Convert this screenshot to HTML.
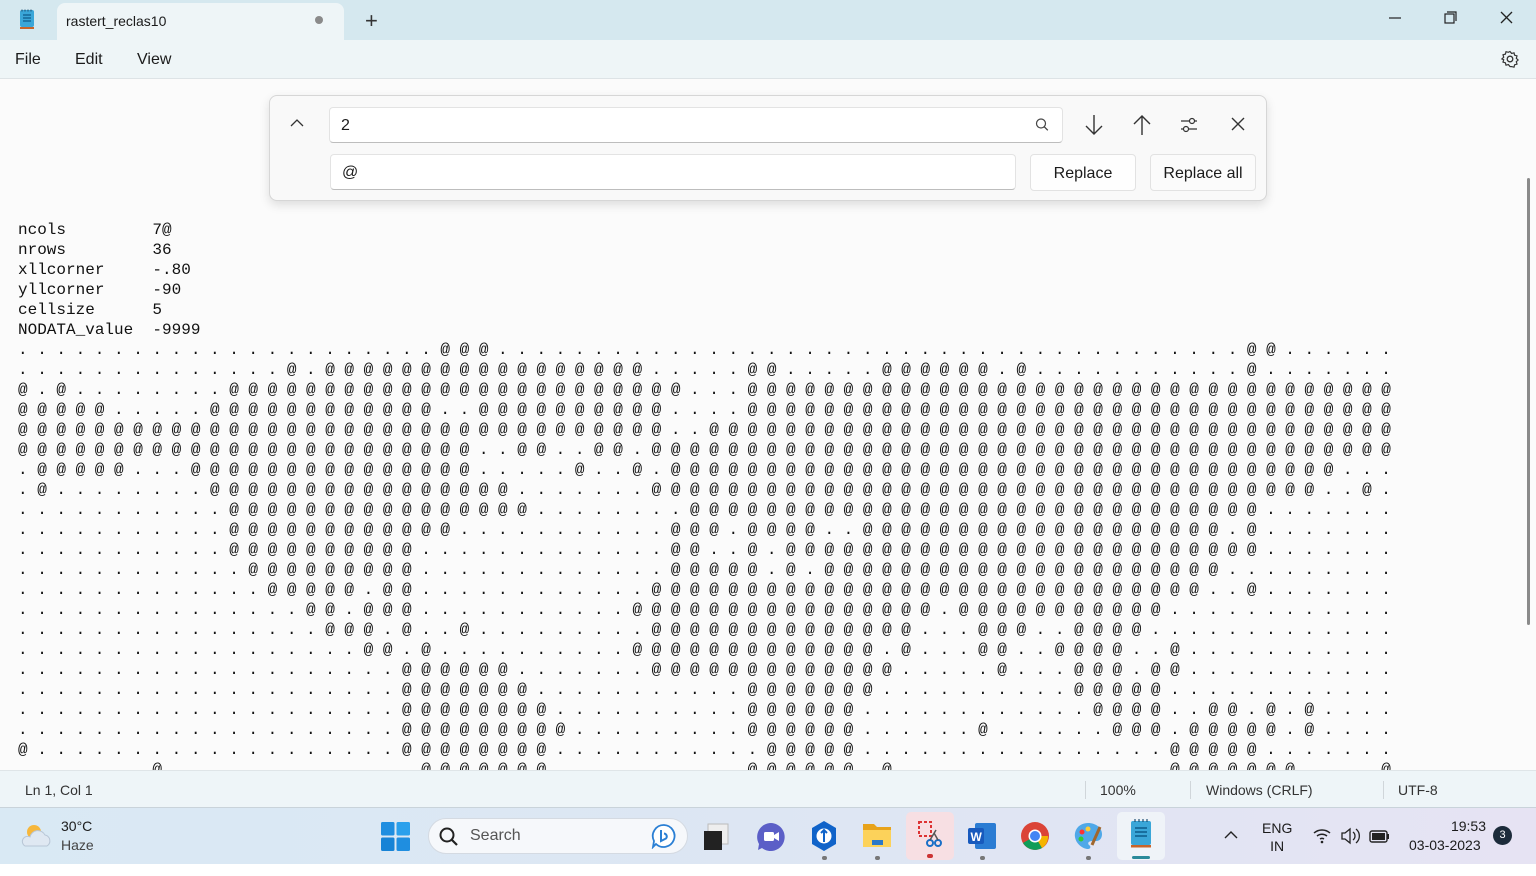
<!DOCTYPE html>
<html><head><meta charset="utf-8">
<style>
*{margin:0;padding:0;box-sizing:border-box}
body{width:1536px;height:876px;overflow:hidden;background:#fff;font-family:"Liberation Sans",sans-serif;position:relative;color:#1b1b1b}
.abs{position:absolute}
#title{left:0;top:0;width:1536px;height:40px;background:#d5e8ef}
#tab{left:57px;top:3px;width:287px;height:37px;background:#eef5f7;border-radius:8px 8px 0 0}
#menu{left:0;top:40px;width:1536px;height:39px;background:#eef5f7;border-bottom:1px solid #dde3e6}
#editor{left:0;top:79px;width:1536px;height:691px;background:#fbfbfb;overflow:hidden}
#text{position:absolute;left:18px;top:141px;font-family:"Liberation Mono",monospace;font-size:16px;line-height:20px;color:#111;white-space:pre}
.g{letter-spacing:9.6px}
#status{left:0;top:770px;width:1536px;height:37px;background:#eef5f8;border-top:1px solid #dfe5e8;font-size:14px;color:#333}
#task{left:0;top:807px;width:1536px;height:57px;background:linear-gradient(90deg,#d9e9f4,#dde6f3 50%,#e6e3f3);border-top:1px solid #c9d3da}
.sep{position:absolute;top:10px;width:1px;height:18px;background:#d0d6da}
</style></head><body>
<div id="title" class="abs"></div>
<div id="tab" class="abs"></div>
<svg class="abs" style="left:18px;top:8px" width="18" height="22" viewBox="0 0 18 22"><rect x="2" y="2" width="14" height="17" rx="2" fill="#3aa6d8"/><path d="M5 7h8M5 10h8M5 13h8" stroke="#0d5b8a" stroke-width="1.3"/><path d="M4 1.5v2M7 1.5v2M10 1.5v2M13 1.5v2" stroke="#1e4f72" stroke-width="1"/><rect x="2" y="19" width="14" height="2" fill="#c8642a"/></svg>
<div class="abs" style="left:66px;top:13px;font-size:14px;color:#1b1b1b">rastert_reclas10</div>
<div class="abs" style="left:315px;top:16px;width:8px;height:8px;border-radius:50%;background:#8a8a8a"></div>
<div class="abs" style="left:365px;top:8px;font-size:22px;color:#333;font-weight:300">+</div>
<svg class="abs" style="left:1386px;top:10px" width="130" height="20"><path d="M3 8h12" stroke="#222" stroke-width="1.2"/><rect x="59" y="4" width="9" height="9" fill="none" stroke="#222" stroke-width="1.2"/><path d="M61 2h9v9" fill="none" stroke="#222" stroke-width="1.2"/><path d="M115 2l11 11M126 2l-11 11" stroke="#222" stroke-width="1.3"/></svg>
<div id="menu" class="abs"></div>
<div class="abs" style="left:15px;top:51px;font-size:16px">File</div>
<div class="abs" style="left:75px;top:51px;font-size:16px">Edit</div>
<div class="abs" style="left:137px;top:51px;font-size:16px">View</div>
<svg class="abs" style="left:1500px;top:49px" width="20" height="20" viewBox="0 0 20 20"><circle cx="10" cy="10" r="2.8" fill="none" stroke="#333" stroke-width="1.3"/><path d="M10 2.5l1.6 1.9 2.4-.6.6 2.4 2.4.7-.7 2.4 1.8 1.7-1.8 1.7.7 2.4-2.4.7-.6 2.4-2.4-.6L10 17.5l-1.6-1.9-2.4.6-.6-2.4-2.4-.7.7-2.4L1.9 9.9l1.8-1.7-.7-2.4 2.4-.7.6-2.4 2.4.6z" fill="none" stroke="#333" stroke-width="1.2"/></svg>
<div id="editor" class="abs">
<div id="text"><div>ncols         7@
nrows         36
xllcorner     -.80
yllcorner     -90
cellsize      5
NODATA_value  -9999</div><div class="g">......................@@@.......................................@@......
..............@.@@@@@@@@@@@@@@@@@.....@@.....@@@@@@.@...........@.......
@.@........@@@@@@@@@@@@@@@@@@@@@@@@...@@@@@@@@@@@@@@@@@@@@@@@@@@@@@@@@@@
@@@@@.....@@@@@@@@@@@@..@@@@@@@@@@....@@@@@@@@@@@@@@@@@@@@@@@@@@@@@@@@@@
@@@@@@@@@@@@@@@@@@@@@@@@@@@@@@@@@@..@@@@@@@@@@@@@@@@@@@@@@@@@@@@@@@@@@@@
@@@@@@@@@@@@@@@@@@@@@@@@..@@..@@.@@@@@@@@@@@@@@@@@@@@@@@@@@@@@@@@@@@@@@@
.@@@@@...@@@@@@@@@@@@@@@.....@..@.@@@@@@@@@@@@@@@@@@@@@@@@@@@@@@@@@@@...
.@........@@@@@@@@@@@@@@@@.......@@@@@@@@@@@@@@@@@@@@@@@@@@@@@@@@@@@..@.
...........@@@@@@@@@@@@@@@@........@@@@@@@@@@@@@@@@@@@@@@@@@@@@@@.......
...........@@@@@@@@@@@@...........@@@.@@@@..@@@@@@@@@@@@@@@@@@@.@.......
...........@@@@@@@@@@.............@@..@.@@@@@@@@@@@@@@@@@@@@@@@@@.......
............@@@@@@@@@.............@@@@@.@.@@@@@@@@@@@@@@@@@@@@@.........
.............@@@@@.@@............@@@@@@@@@@@@@@@@@@@@@@@@@@@@@..@.......
...............@@.@@@...........@@@@@@@@@@@@@@@@.@@@@@@@@@@@............
................@@@.@..@.........@@@@@@@@@@@@@@...@@@..@@@@.............
..................@@.@..........@@@@@@@@@@@@@.@...@@..@@@@..@...........
....................@@@@@@.......@@@@@@@@@@@@@.....@...@@@.@@...........
....................@@@@@@@...........@@@@@@@..........@@@@@............
....................@@@@@@@@..........@@@@@@............@@@@..@@.@.@....
....................@@@@@@@@@.........@@@@@@......@......@@@.@@@@@.@....
@...................@@@@@@@@...........@@@@@................@@@@@.......
.......@.............@@@@@@@..........@@@@@@.@..............@@@@@@@....@</div></div>
<div class="abs" style="left:1527px;top:99px;width:3px;height:447px;background:#8a8a8a;border-radius:2px"></div>
</div>
<div class="abs" style="left:269px;top:95px;width:998px;height:106px;background:#f9f9f9;border:1px solid #d6d6d6;border-radius:8px;box-shadow:0 4px 10px rgba(0,0,0,.12)"></div>
<svg class="abs" style="left:289px;top:117px" width="16" height="12"><path d="M2 9l6-6 6 6" fill="none" stroke="#333" stroke-width="1.3"/></svg>
<div class="abs" style="left:329px;top:107px;width:734px;height:36px;background:#fff;border:1px solid #e3e3e3;border-bottom:1px solid #bdbdbd;border-radius:4px"></div>
<div class="abs" style="left:341px;top:117px;font-size:16px">2</div>
<svg class="abs" style="left:1034px;top:117px" width="16" height="16"><circle cx="7" cy="6.5" r="4.5" fill="none" stroke="#444" stroke-width="1.2"/><path d="M10.3 9.8l3.5 3.5" stroke="#444" stroke-width="1.3"/></svg>
<svg class="abs" style="left:1082px;top:112px" width="170" height="26"><path d="M12 3v19M4 14l8 8 8-8" fill="none" stroke="#333" stroke-width="1.4"/><path d="M60 23V4M52 12l8-8 8 8" fill="none" stroke="#333" stroke-width="1.4"/><path d="M99 9h16M99 17h16" stroke="#333" stroke-width="1.3"/><circle cx="110" cy="9" r="2.5" fill="#f9f9f9" stroke="#333" stroke-width="1.2"/><circle cx="104" cy="17" r="2.5" fill="#f9f9f9" stroke="#333" stroke-width="1.2"/><path d="M150 6l12 12M162 6l-12 12" stroke="#333" stroke-width="1.4"/></svg>
<div class="abs" style="left:330px;top:154px;width:686px;height:36px;background:#fff;border:1px solid #e3e3e3;border-bottom:1px solid #bdbdbd;border-radius:4px"></div>
<div class="abs" style="left:342px;top:164px;font-size:16px">@</div>
<div class="abs" style="left:1030px;top:154px;width:106px;height:37px;background:#fefefe;border:1px solid #e2e2e2;border-radius:4px;font-size:16px;text-align:center;line-height:38px">Replace</div>
<div class="abs" style="left:1150px;top:154px;width:106px;height:37px;background:#fbfbfb;border:1px solid #e2e2e2;border-radius:4px;font-size:16px;text-align:center;line-height:38px">Replace all</div>
<div id="status" class="abs">
<div class="abs" style="left:25px;top:11px">Ln 1, Col 1</div>
<div class="sep" style="left:1085px"></div>
<div class="abs" style="left:1100px;top:11px">100%</div>
<div class="sep" style="left:1190px"></div>
<div class="abs" style="left:1206px;top:11px">Windows (CRLF)</div>
<div class="sep" style="left:1383px"></div>
<div class="abs" style="left:1398px;top:11px">UTF-8</div>
</div>
<div id="task" class="abs">
<svg class="abs" style="left:20px;top:12px" width="34" height="30"><circle cx="14" cy="12" r="7" fill="#f6b73c"/><path d="M5 26h22a6 6 0 0 0-2-11 8 8 0 0 0-15 2 5 5 0 0 0-5 9z" fill="#dfe8f2" stroke="#b8c6d6"/></svg>
<div class="abs" style="left:61px;top:10px;font-size:14px">30°C</div>
<div class="abs" style="left:61px;top:29px;font-size:14px;color:#444">Haze</div>
<svg class="abs" style="left:381px;top:14px" width="29" height="29"><rect x="0" y="0" width="13.5" height="13.5" rx="1.5" fill="#1f8ee0"/><rect x="15.5" y="0" width="13.5" height="13.5" rx="1.5" fill="#2aa0ec"/><rect x="0" y="15.5" width="13.5" height="13.5" rx="1.5" fill="#1783d6"/><rect x="15.5" y="15.5" width="13.5" height="13.5" rx="1.5" fill="#1f8ee0"/></svg>
<div class="abs" style="left:428px;top:10px;width:260px;height:36px;background:#f6f8fb;border:1px solid #d4dae2;border-radius:18px"></div>
<svg class="abs" style="left:438px;top:18px" width="22" height="22"><circle cx="9" cy="9" r="6.5" fill="none" stroke="#222" stroke-width="2"/><path d="M14 14l5 5" stroke="#222" stroke-width="2.2"/></svg>
<div class="abs" style="left:470px;top:19px;font-size:16px;color:#555">Search</div>
<svg class="abs" style="left:651px;top:15px" width="26" height="26"><path d="M13 2a11 11 0 1 1-8 19l-3 3 1-6A11 11 0 0 1 13 2z" fill="#fff" stroke="#2a7fd4" stroke-width="1.8"/><path d="M10 7v11l5-2.5a3 3 0 0 0-2-5" fill="none" stroke="#2a7fd4" stroke-width="2"/></svg>
<svg class="abs" style="left:702px;top:14px" width="30" height="30"><rect x="6" y="2" width="20" height="20" fill="#eee" stroke="#bbb"/><rect x="2" y="9" width="18" height="19" fill="#222"/></svg>
<svg class="abs" style="left:756px;top:14px" width="30" height="30"><path d="M15 1a14 14 0 1 1-9 25l-4 2 1-6A14 14 0 0 1 15 1z" fill="#5b5fc7"/><rect x="8" y="10" width="10" height="9" rx="1.5" fill="#fff"/><path d="M18 13l5-3v9l-5-3z" fill="#fff"/></svg>
<svg class="abs" style="left:810px;top:12px" width="28" height="32"><path d="M14 1l12 7v16l-12 7-12-7V8z" fill="#1063c9"/><circle cx="14" cy="16" r="7.5" fill="#fff"/><path d="M14 10v12M11 13l3-3 3 3" stroke="#1063c9" stroke-width="2" fill="none"/></svg>
<svg class="abs" style="left:862px;top:13px" width="30" height="28"><path d="M1 3h11l3 3h14v20H1z" fill="#e8a31a"/><rect x="1" y="9" width="28" height="17" fill="#fcd25a"/><rect x="10" y="19" width="11" height="5" fill="#2a78c9"/></svg>
<div class="abs" style="left:906px;top:4px;width:48px;height:48px;background:#f7dfe3;border-radius:5px"></div>
<svg class="abs" style="left:916px;top:12px" width="28" height="32"><rect x="3" y="2" width="12" height="14" fill="none" stroke="#d33" stroke-width="2" stroke-dasharray="3 2"/><circle cx="14" cy="23" r="3" fill="none" stroke="#1a6fc7" stroke-width="2"/><circle cx="22" cy="23" r="3" fill="none" stroke="#1a6fc7" stroke-width="2"/><path d="M14 20l6-10M22 20l-4-7" stroke="#555" stroke-width="1.5"/></svg>
<div class="abs" style="left:927px;top:46px;width:6px;height:4px;border-radius:2px;background:#c33"></div>
<svg class="abs" style="left:967px;top:14px" width="30" height="28"><rect x="8" y="1" width="21" height="26" rx="2" fill="#2b7cd3"/><rect x="1" y="6" width="16" height="16" rx="2" fill="#185abd"/><text x="3.5" y="19" font-size="12" font-weight="bold" fill="#fff" font-family="Liberation Sans">W</text></svg>
<svg class="abs" style="left:1020px;top:13px" width="30" height="30"><circle cx="15" cy="15" r="14" fill="#db4437"/><path d="M15 15L3 22A14 14 0 0 0 22 27z" fill="#0f9d58"/><path d="M15 15h13A14 14 0 0 1 22 27z" fill="#f4b400"/><circle cx="15" cy="15" r="6.5" fill="#fff"/><circle cx="15" cy="15" r="5" fill="#4285f4"/></svg>
<svg class="abs" style="left:1073px;top:13px" width="30" height="30"><path d="M15 2C6 2 1 9 2 16s8 12 13 12c3 0 3-3 1-4-2-2 0-4 3-4h4c4 0 6-3 6-7C29 7 23 2 15 2z" fill="#4fa8e8"/><circle cx="9" cy="11" r="2.5" fill="#f33"/><circle cx="15" cy="8" r="2.5" fill="#fc3"/><circle cx="8" cy="18" r="2.5" fill="#3c3"/><path d="M27 6l-8 18" stroke="#a0662c" stroke-width="3"/></svg>
<div class="abs" style="left:1117px;top:4px;width:48px;height:48px;background:#eff3f8;border-radius:5px"></div>
<svg class="abs" style="left:1127px;top:10px" width="28" height="32"><rect x="4" y="3" width="20" height="24" rx="2" fill="#3aa6d8"/><path d="M8 10h12M8 14h12M8 18h12" stroke="#0d5b8a" stroke-width="1.6"/><path d="M8 1v3M12 1v3M16 1v3M20 1v3" stroke="#1e4f72" stroke-width="1.2"/><rect x="4" y="27" width="20" height="2.5" fill="#c8642a"/></svg>
<div class="abs" style="left:1132px;top:48px;width:18px;height:3px;border-radius:2px;background:#2a8a9a"></div>
<div class="abs" style="left:822px;top:48px;width:5px;height:4px;border-radius:2px;background:#777"></div>
<div class="abs" style="left:875px;top:48px;width:5px;height:4px;border-radius:2px;background:#777"></div>
<div class="abs" style="left:980px;top:48px;width:5px;height:4px;border-radius:2px;background:#777"></div>
<div class="abs" style="left:1086px;top:48px;width:5px;height:4px;border-radius:2px;background:#777"></div>
<svg class="abs" style="left:1223px;top:22px" width="16" height="10"><path d="M2 8l6-6 6 6" fill="none" stroke="#222" stroke-width="1.4"/></svg>
<div class="abs" style="left:1262px;top:11px;font-size:14px;line-height:18px;text-align:center">ENG<br>IN</div>
<svg class="abs" style="left:1312px;top:18px" width="84" height="20"><path d="M2 7a12 12 0 0 1 16 0M5 10a8 8 0 0 1 10 0M8 13a4 4 0 0 1 4 0" fill="none" stroke="#222" stroke-width="1.5"/><circle cx="10" cy="16" r="1.3" fill="#222"/><path d="M30 7h3l5-4v14l-5-4h-3z" fill="none" stroke="#222" stroke-width="1.3"/><path d="M41 6a5 5 0 0 1 0 8M44 3a9 9 0 0 1 0 14" fill="none" stroke="#222" stroke-width="1.3"/><rect x="58" y="5" width="17" height="11" rx="2" fill="none" stroke="#222" stroke-width="1.4"/><rect x="60" y="7" width="13" height="7" fill="#222"/><rect x="75" y="8" width="2" height="5" fill="#222"/></svg>
<div class="abs" style="left:1448px;top:10px;font-size:14px;width:38px;text-align:right">19:53</div>
<div class="abs" style="left:1409px;top:29px;font-size:14px">03-03-2023</div>
<div class="abs" style="left:1493px;top:18px;width:19px;height:19px;border-radius:50%;background:#1c2b3a;color:#fff;font-size:11px;text-align:center;line-height:19px">3</div>
</div>
</body></html>
